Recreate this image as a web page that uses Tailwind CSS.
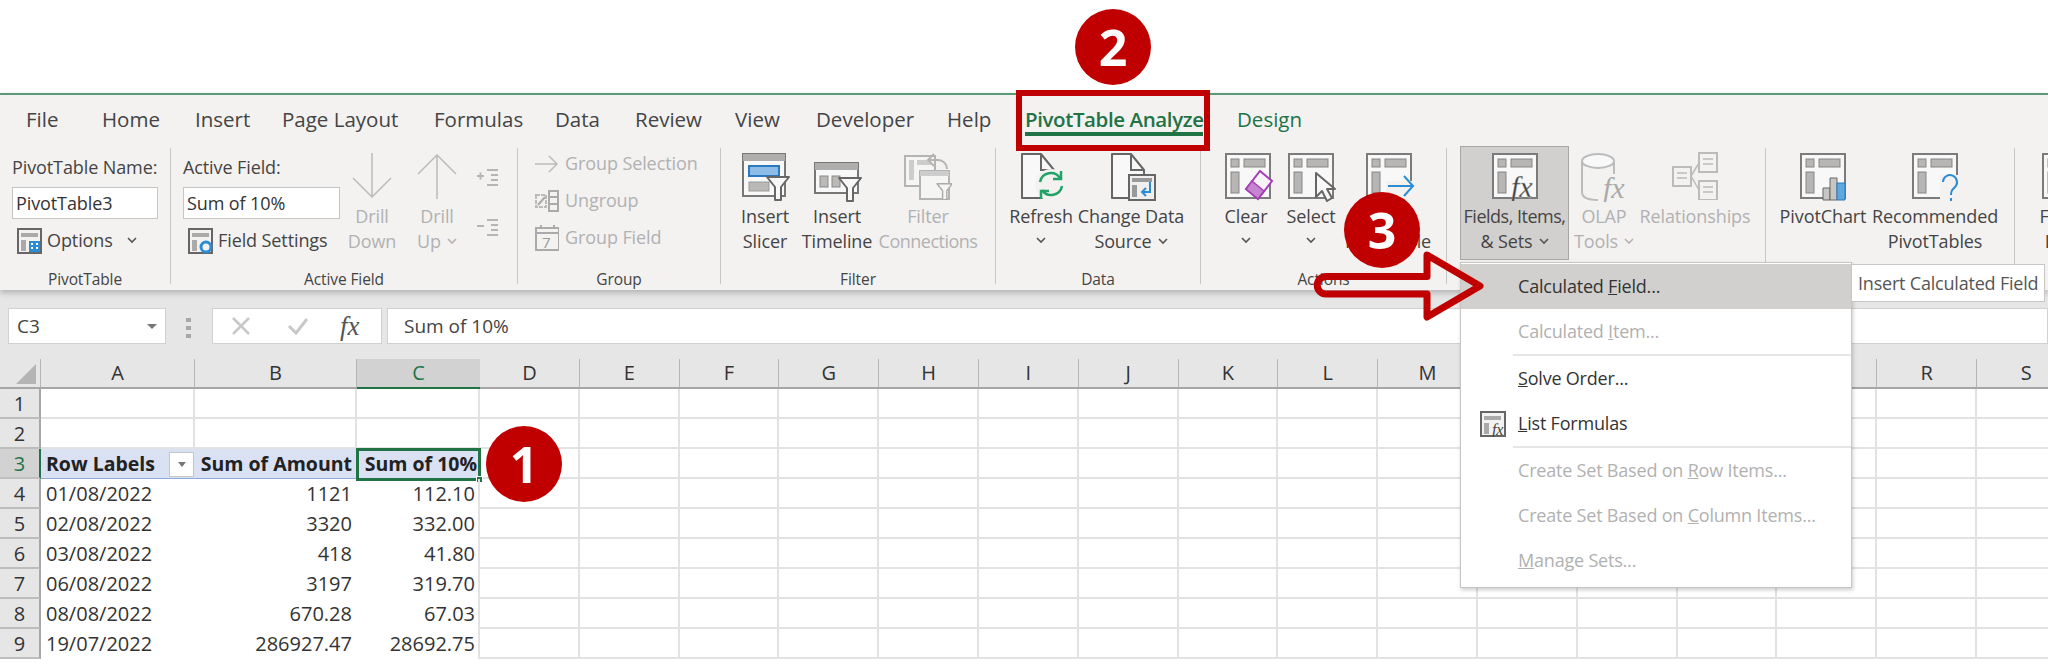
<!DOCTYPE html>
<html lang="en">
<head>
  <meta charset="UTF-8" />
  <title>PivotTable Analyze</title>
  <script src="https://cdn.jsdelivr.net/npm/@tailwindcss/browser@4"></script>
</head>
<body class="relative w-[2048px] h-[663px] overflow-hidden bg-white text-[#444] [font-family:'Open_Sans',sans-serif]">

  <!-- shared ribbon icons -->
  <svg class="hidden">
    <defs>
      <g id="pivot">
        <rect x="1" y="1" width="44" height="44" fill="#f8f8f8" stroke="#7b7b7b" stroke-width="2"/>
        <rect x="6" y="6" width="8" height="8" fill="#b8b6b4" stroke="#858585"/>
        <rect x="19" y="6" width="21" height="8" fill="#b8b6b4" stroke="#858585"/>
        <rect x="6" y="19" width="8" height="21" fill="#b8b6b4" stroke="#858585"/>
      </g>
      <g id="funnel">
        <path d="M1 1h22l-8 10v13h-6v-13z" fill="#f8f8f8" stroke="#666" stroke-width="2" stroke-linejoin="round"/>
      </g>
      <g id="doc">
        <path d="M1 1h19l13 16v28h-32z" fill="#f8f8f8" stroke="#666" stroke-width="2" stroke-linejoin="round"/>
        <path d="M20 1v16h13" fill="none" stroke="#666" stroke-width="2"/>
      </g>
      <path id="chev" d="M1 1l4 4 4-4" fill="none" stroke="#555" stroke-width="1.6"/>
    </defs>
  </svg>

  <!-- ribbon -->
  <div class="mt-[93px] border-t-2 border-[#5a9a74] bg-[#f3f2f1] h-[197px] relative z-10 shadow-[0_3px_6px_rgba(0,0,0,0.22)] overflow-hidden">
    <nav class="flex h-[49px] items-center text-[20.5px]">
      <span class="ml-[26px] w-[76px]">File</span>
      <span class="w-[93px]">Home</span>
      <span class="w-[87px]">Insert</span>
      <span class="w-[152px]">Page Layout</span>
      <span class="w-[121px]">Formulas</span>
      <span class="w-[80px]">Data</span>
      <span class="w-[100px]">Review</span>
      <span class="w-[81px]">View</span>
      <span class="w-[131px]">Developer</span>
      <span class="w-[78px]">Help</span>
      <span class="relative w-[212px] font-semibold text-[#217346] tracking-[-0.4px]">PivotTable Analyze<span class="absolute left-0 top-[28px] w-[178px] h-[4px] bg-[#217346]"></span></span>
      <span class="text-[#217346]">Design</span>
    </nav>

    <div class="flex h-[136px] mt-[4px] text-[18px] leading-[25px] tracking-[-0.1px]">

      <!-- PivotTable -->
      <section class="w-[171px] shrink-0 h-full border-r border-[#c8c6c4] flex flex-col">
        <div class="pl-[12px] pt-[7px] whitespace-nowrap">PivotTable Name:</div>
        <div class="ml-[12px] mt-[7px] w-[146px] h-[32px] border border-[#c6c6c6] bg-white pl-[3px] leading-[30px] text-[#333]">PivotTable3</div>
        <div class="ml-[17px] mt-[9px] flex items-center h-[25px]">
          <svg width="25" height="26" viewBox="0 0 25 26"><rect x="1" y="1" width="23" height="24" fill="#f3f2f1" stroke="#666" stroke-width="2"/><rect x="4" y="5" width="17" height="4" fill="#aaa"/><rect x="4" y="12" width="5" height="11" fill="#aaa"/><rect x="12" y="13" width="11" height="11" fill="#2a8dd4"/><path d="M14 16h2M19 16h2M14 20h2M19 20h2" stroke="#fff" stroke-width="2"/></svg>
          <span class="ml-[5px]">Options</span>
          <svg class="ml-[14px]" width="10" height="7"><use href="#chev"/></svg>
        </div>
        <div class="mt-auto mb-[-7px] text-center text-[15.5px] leading-[24px]">PivotTable</div>
      </section>

      <!-- Active Field -->
      <section class="w-[347px] shrink-0 h-full border-r border-[#c8c6c4] flex flex-col">
        <div class="flex">
          <div class="ml-[12px] w-[157px]">
            <div class="pt-[7px]">Active Field:</div>
            <div class="mt-[7px] h-[32px] border border-[#c6c6c6] bg-white pl-[3px] leading-[30px] text-[#333]">Sum of 10%</div>
            <div class="mt-[9px] ml-[5px] flex items-center h-[25px] whitespace-nowrap">
              <svg width="25" height="26" viewBox="0 0 25 26"><rect x="1" y="1" width="23" height="24" fill="#f3f2f1" stroke="#666" stroke-width="2"/><rect x="4" y="5" width="17" height="4" fill="#aaa"/><rect x="4" y="12" width="5" height="11" fill="#aaa"/><circle cx="18" cy="19" r="5" fill="none" stroke="#2a8dd4" stroke-width="3"/></svg>
              <span class="ml-[5px]">Field Settings</span>
            </div>
          </div>
          <div class="ml-[2px] w-[60px] flex flex-col items-center text-[#b1b1b1]">
            <div class="h-[56px] pt-[5px]"><svg width="40" height="46" viewBox="0 0 40 46"><path d="M20 0v44M1 25l19 19 19-19" fill="none" stroke="#bbb" stroke-width="1.5"/></svg></div>
            <div>Drill</div>
            <div>Down</div>
          </div>
          <div class="ml-[5px] w-[60px] flex flex-col items-center text-[#b1b1b1]">
            <div class="h-[56px] pt-[5px]"><svg width="40" height="46" viewBox="0 0 40 46"><path d="M20 46V2M1 21L20 2l19 19" fill="none" stroke="#bbb" stroke-width="1.5"/></svg></div>
            <div>Drill</div>
            <div class="flex items-center">Up<svg class="ml-[6px]" width="10" height="7"><use href="#chev" opacity=".4"/></svg></div>
          </div>
          <div class="ml-[9px] w-[24px] flex flex-col pt-[21px] gap-[32px]">
            <svg width="24" height="18" viewBox="0 0 24 18"><path d="M1 7h7M4.500 3.500v7M11 1h11M15 6h7M15 11h7M11 16h11" fill="none" stroke="#b5b5b5" stroke-width="2"/></svg>
            <svg width="24" height="18" viewBox="0 0 24 18"><path d="M1 7h7M11 1h11M15 6h7M15 11h7M11 16h11" fill="none" stroke="#b5b5b5" stroke-width="2"/></svg>
          </div>
        </div>
        <div class="mt-auto mb-[-7px] text-center text-[15.5px] leading-[24px]">Active Field</div>
      </section>

      <!-- Group -->
      <section class="w-[203px] shrink-0 h-full border-r border-[#c8c6c4] flex flex-col text-[#b1b1b1]">
        <div class="pl-[17px] -mt-[3px]">
          <div class="h-[37px] flex items-center whitespace-nowrap">
            <svg class="w-[24px]" height="18" viewBox="0 0 24 18"><path d="M0 9h22M14 1l8 8-8 8" fill="none" stroke="#bbb" stroke-width="1.5"/></svg>
            <span class="ml-[6px]">Group Selection</span>
          </div>
          <div class="h-[37px] flex items-center">
            <svg class="w-[24px]" height="24" viewBox="0 0 24 24"><rect x="1" y="6" width="10" height="12" fill="none" stroke="#bbb" stroke-width="2" stroke-dasharray="4 1"/><path d="M3 16l7-8M14 2h9v20h-9zM14 8h9M14 15h9" fill="none" stroke="#aaa" stroke-width="2"/></svg>
            <span class="ml-[6px]">Ungroup</span>
          </div>
          <div class="h-[37px] flex items-center">
            <svg class="w-[24px]" height="26" viewBox="0 0 24 26"><rect x="1" y="3" width="23" height="22" fill="#f3f2f1" stroke="#aaa" stroke-width="2"/><path d="M1 8h23M6 0v4M19 0v4" stroke="#aaa" stroke-width="2"/><text x="7" y="23" font-size="15" fill="#999" font-family="Open Sans">7</text></svg>
            <span class="ml-[6px]">Group Field</span>
          </div>
        </div>
        <div class="mt-auto mb-[-7px] text-center text-[15.5px] leading-[24px] text-[#444]">Group</div>
      </section>

      <!-- Filter -->
      <section class="w-[275px] shrink-0 h-full border-r border-[#c8c6c4] flex flex-col">
        <div class="flex">
          <div class="ml-[14px] w-[60px] flex flex-col items-center">
            <div class="h-[56px] pt-[5px] pl-[2px]">
              <svg width="48" height="48" viewBox="0 0 48 48"><path d="M1 1h42v42h-42z" fill="#f8f8f8" stroke="#777" stroke-width="2"/><rect x="1" y="1" width="42" height="7" fill="#b0aeac"/><rect x="7" y="13" width="30" height="10" fill="#8dbde6" stroke="#2a78bd" stroke-width="2"/><rect x="7" y="29" width="20" height="9" fill="#bbb9b7" stroke="#999"/><use href="#funnel" x="24" y="23"/></svg>
            </div>
            <div>Insert</div>
            <div>Slicer</div>
          </div>
          <div class="ml-[6px] w-[72px] flex flex-col items-center">
            <div class="h-[56px] pt-[14px] pl-[2px]">
              <svg width="48" height="40" viewBox="0 0 48 40"><path d="M1 1h43v30h-43z" fill="#f8f8f8" stroke="#777" stroke-width="2"/><rect x="1" y="1" width="43" height="7" fill="#b0aeac"/><rect x="6" y="14" width="8" height="11" fill="#bbb9b7" stroke="#888"/><rect x="18" y="14" width="8" height="11" fill="#bbb9b7" stroke="#888"/><use href="#funnel" x="24" y="15"/></svg>
            </div>
            <div>Insert</div>
            <div>Timeline</div>
          </div>
          <div class="ml-[3px] w-[104px] flex flex-col items-center text-[#b1b1b1] whitespace-nowrap">
            <div class="h-[56px] pt-[4px]">
              <svg width="48" height="48" viewBox="0 0 48 48" opacity=".5"><path d="M1 4h30v30h-30z" fill="#f8f8f8" stroke="#777" stroke-width="2"/><rect x="5" y="8" width="5" height="20" fill="#aaa"/><rect x="13" y="8" width="14" height="5" fill="#aaa"/><path d="M16 19h29v28h-29z" fill="#f8f8f8" stroke="#777" stroke-width="2"/><rect x="16" y="19" width="29" height="5" fill="#aaa"/><path d="M30 2l-6 6 6 6M24 8h10a9 9 0 0 1 9 9" fill="none" stroke="#777" stroke-width="2"/><use href="#funnel" x="29" y="30" transform="translate(12 10) scale(.7)"/></svg>
            </div>
            <div>Filter</div>
            <div class="tracking-[-0.5px]">Connections</div>
          </div>
        </div>
        <div class="mt-auto mb-[-7px] text-center text-[15.5px] leading-[24px]">Filter</div>
      </section>

      <!-- Data -->
      <section class="w-[205px] shrink-0 h-full border-r border-[#c8c6c4] flex flex-col">
        <div class="flex">
          <div class="ml-[10px] w-[70px] flex flex-col items-center">
            <div class="h-[56px] pt-[5px] pl-[6px]">
              <svg width="46" height="48" viewBox="0 0 46 48"><use href="#doc"/><circle cx="30" cy="32" r="16" fill="#f3f2f1"/><path d="M19 29a11 11 0 0 1 20-4M41 33a11 11 0 0 1-20 4" fill="none" stroke="#21a366" stroke-width="2.500"/><path d="M40 18v8h-8M20 46v-8h8" fill="none" stroke="#21a366" stroke-width="2.500"/></svg>
            </div>
            <div>Refresh</div>
            <svg class="mt-[8px]" width="10" height="7"><use href="#chev"/></svg>
          </div>
          <div class="w-[110px] flex flex-col items-center whitespace-nowrap">
            <div class="h-[56px] pt-[5px] pl-[6px]">
              <svg width="46" height="48" viewBox="0 0 46 48"><use href="#doc"/><rect x="18" y="22" width="26" height="25" fill="#efefef" stroke="#666" stroke-width="2"/><path d="M21 25h20v4h-20zM21 32h5v12h-5z" fill="#999"/><path d="M39 30v10h-8M35 36l-4 4 4 4" transform="translate(0 -1)" fill="none" stroke="#2a8dd4" stroke-width="2"/></svg>
            </div>
            <div>Change Data</div>
            <div class="flex items-center">Source<svg class="ml-[6px]" width="10" height="7"><use href="#chev"/></svg></div>
          </div>
        </div>
        <div class="mt-auto mb-[-7px] text-center text-[15.5px] leading-[24px]">Data</div>
      </section>

      <!-- Actions -->
      <section class="w-[246px] shrink-0 h-full border-r border-[#c8c6c4] flex flex-col">
        <div class="flex">
          <div class="ml-[15px] w-[60px] flex flex-col items-center">
            <div class="h-[56px] pt-[5px] pl-[8px]">
              <svg width="50" height="48" viewBox="0 0 50 48"><use href="#pivot"/><path d="M35 18l12 10-14 18-12-10z" fill="#f8f2f9" stroke="#a33eb5" stroke-width="2"/><path d="M21 36l6-8 12 10-6 8z" fill="#c583d0" stroke="#a33eb5" stroke-width="1.500"/></svg>
            </div>
            <div>Clear</div>
            <svg class="mt-[8px]" width="10" height="7"><use href="#chev"/></svg>
          </div>
          <div class="ml-[5px] w-[60px] flex flex-col items-center">
            <div class="h-[56px] pt-[5px] pl-[4px]">
              <svg width="50" height="50" viewBox="0 0 50 50"><use href="#pivot"/><path d="M28 20v24l6-6 5 10 5-3-5-9h8z" fill="#f8f8f8" stroke="#666" stroke-width="2" stroke-linejoin="round"/></svg>
            </div>
            <div>Select</div>
            <svg class="mt-[8px]" width="10" height="7"><use href="#chev"/></svg>
          </div>
          <div class="ml-[2px] w-[90px] flex flex-col items-center">
            <div class="h-[56px] pt-[5px] pl-[6px]">
              <svg width="50" height="48" viewBox="0 0 50 48"><use href="#pivot"/><rect x="20" y="28" width="30" height="20" fill="#f3f2f1"/><path d="M22 33h24M38 23l9 10-9 10" fill="none" stroke="#2a8dd4" stroke-width="2"/></svg>
            </div>
            <div class="h-[25px]"></div>
            <div>PivotTable</div>
          </div>
        </div>
        <div class="mt-auto mb-[-7px] text-center text-[15.5px] leading-[24px]">Actions</div>
      </section>

      <!-- Calculations -->
      <section class="w-[319px] shrink-0 h-full border-r border-[#c8c6c4] flex flex-col">
        <div class="flex">
          <div class="ml-[13px] -mt-[2px] w-[109px] h-[114px] bg-[#d2d0ce] border border-[#a9a7a5] flex flex-col items-center whitespace-nowrap">
            <div class="h-[57px] pt-[6px]">
              <svg width="46" height="48" viewBox="0 0 46 48"><use href="#pivot"/><text x="19" y="44" font-size="30" font-style="italic" fill="#444" stroke="#d2d0ce" stroke-width=".3" font-family="Liberation Serif">fx</text></svg>
            </div>
            <div class="tracking-[-0.5px]">Fields, Items,</div>
            <div class="flex items-center">&amp; Sets<svg class="ml-[6px]" width="10" height="7"><use href="#chev"/></svg></div>
          </div>
          <div class="ml-[5px] w-[60px] flex flex-col items-center text-[#b1b1b1]">
            <div class="h-[56px] pt-[4px]">
              <svg width="46" height="50" viewBox="0 0 46 50"><path d="M1 10v30c0 6 8 8 16 8M33 10v12" fill="none" stroke="#bbb" stroke-width="2"/><ellipse cx="17" cy="9" rx="16" ry="7" fill="#f8f8f8" stroke="#bbb" stroke-width="2"/><text x="22" y="46" font-size="30" font-style="italic" fill="#aaa" font-family="Liberation Serif">fx</text></svg>
            </div>
            <div>OLAP</div>
            <div class="flex items-center">Tools<svg class="ml-[6px]" width="10" height="7"><use href="#chev" opacity=".4"/></svg></div>
          </div>
          <div class="ml-[4px] w-[114px] flex flex-col items-center text-[#b1b1b1]">
            <div class="h-[56px] pt-[4px]">
              <svg width="46" height="48" viewBox="0 0 46 48"><rect x="27" y="1" width="18" height="19" fill="#f3f2f1" stroke="#bbb" stroke-width="2"/><rect x="27" y="29" width="18" height="19" fill="#f3f2f1" stroke="#bbb" stroke-width="2"/><rect x="1" y="15" width="18" height="19" fill="#f3f2f1" stroke="#bbb" stroke-width="2"/><path d="M19 24l8-13M19 24l8 14M5 21h10M5 26h10M31 7h10M31 12h10M31 35h10M31 40h10" fill="none" stroke="#bbb" stroke-width="1.500"/></svg>
            </div>
            <div>Relationships</div>
          </div>
        </div>
      </section>

      <!-- Tools -->
      <section class="w-[249px] shrink-0 h-full border-r border-[#c8c6c4] flex flex-col">
        <div class="flex">
          <div class="ml-[12px] w-[90px] flex flex-col items-center">
            <div class="h-[56px] pt-[5px] pl-[2px]">
              <svg width="48" height="48" viewBox="0 0 48 48"><use href="#pivot"/><path d="M23 35h7v12h-7z" fill="#c8c6c4" stroke="#666"/><path d="M30 25h7v22h-7z" fill="#c8c6c4" stroke="#666"/><path d="M37 30h8v17h-8z" fill="#5ea8e0" stroke="#2a78bd"/></svg>
            </div>
            <div>PivotChart</div>
          </div>
          <div class="ml-[2px] w-[130px] flex flex-col items-center">
            <div class="h-[56px] pt-[5px] pl-[2px]">
              <svg width="48" height="48" viewBox="0 0 48 48"><use href="#pivot"/><rect x="28" y="22" width="20" height="26" fill="#f3f2f1"/><path d="M31 29a7 7 0 1 1 12 5c-3 3-4 4-4 8M39 45v3" fill="none" stroke="#2a8dd4" stroke-width="2"/></svg>
            </div>
            <div>Recommended</div>
            <div>PivotTables</div>
          </div>
        </div>
      </section>

      <!-- Show -->
      <section class="w-[60px] shrink-0 h-full">
        <div class="ml-[14px] w-[60px] flex flex-col items-center">
          <div class="h-[56px] pt-[5px] pl-[12px]"><svg width="46" height="46"><use href="#pivot"/></svg></div>
          <div>Field</div>
          <div>List</div>
        </div>
      </section>
    </div>
  </div>

  <!-- formula bar -->
  <div class="h-[69px] bg-[#e6e6e6] flex items-start pt-[18px] text-[19px] text-[#444]">
    <div class="ml-[8px] w-[158px] h-[36px] bg-white border border-[#d0d0d0] flex items-center justify-between px-[8px]">
      <span>C3</span>
      <span class="w-0 h-0 border-x-[5px] border-x-transparent border-t-[5px] border-t-[#777]"></span>
    </div>
    <div class="ml-[20px] mt-[10px] w-[6px] flex flex-col gap-[4px]">
      <span class="h-[4px] w-[5px] bg-[#a8a8a8]"></span>
      <span class="h-[4px] w-[5px] bg-[#a8a8a8]"></span>
      <span class="h-[4px] w-[5px] bg-[#a8a8a8]"></span>
    </div>
    <div class="ml-[20px] w-[170px] h-[36px] bg-white border border-[#d0d0d0] flex items-center">
      <svg class="ml-[18px]" width="20" height="18" viewBox="0 0 20 18"><path d="M2 1l16 16M18 1L2 17" stroke="#c8c8c8" stroke-width="2.500"/></svg>
      <svg class="ml-[36px]" width="22" height="18" viewBox="0 0 22 18"><path d="M2 9l7 7L20 2" fill="none" stroke="#c8c8c8" stroke-width="3"/></svg>
      <span class="ml-[31px] italic text-[27px] leading-none text-[#555] [font-family:'Liberation_Serif',serif]">fx</span>
    </div>
    <div class="ml-[5px] flex-1 h-[36px] bg-white border border-[#d0d0d0] flex items-center pl-[16px]">Sum of 10%</div>
  </div>

  <!-- sheet -->
  <div id="sheet" class="text-[20px] text-[#333]"></div>

  <!-- dropdown -->
  <div class="absolute z-20 left-[1460px] top-[262px] w-[392px] h-[326px] bg-white border border-[#c8c6c4] shadow-[1px_2px_4px_rgba(0,0,0,0.2)] text-[18px] tracking-[-0.2px] pt-[1px]">
    <div class="h-[45px] bg-[#d2d0ce] flex items-center pl-[57px] text-[#333]"><span>Calculated <u>F</u>ield...</span></div>
    <div class="h-[45px] flex items-center pl-[57px] text-[#b1b1b1]"><span>Calculated <u>I</u>tem...</span></div>
    <div class="ml-[52px] h-[2px] bg-[#e6e6e6]"></div>
    <div class="h-[45px] flex items-center pl-[57px] text-[#333]"><span><u>S</u>olve Order...</span></div>
    <div class="h-[45px] flex items-center pl-[19px] text-[#333]">
      <svg width="26" height="26" viewBox="0 0 26 26"><rect x="1" y="1" width="24" height="24" fill="#f3f2f1" stroke="#666" stroke-width="2"/><path d="M4 5h17v4H4zM4 12h5v11H4z" fill="#aaa"/><text x="12" y="24" font-size="16" font-style="italic" fill="#444" font-family="Liberation Serif">fx</text></svg>
      <span class="ml-[12px]"><u>L</u>ist Formulas</span>
    </div>
    <div class="ml-[52px] h-[2px] bg-[#e6e6e6]"></div>
    <div class="h-[45px] flex items-center pl-[57px] text-[#b1b1b1]"><span>Create Set Based on <u>R</u>ow Items...</span></div>
    <div class="h-[45px] flex items-center pl-[57px] text-[#b1b1b1]"><span>Create Set Based on <u>C</u>olumn Items...</span></div>
    <div class="h-[45px] flex items-center pl-[57px] text-[#b1b1b1]"><span><u>M</u>anage Sets...</span></div>
  </div>

  <!-- tooltip -->
  <div class="absolute z-20 left-[1851px] top-[264px] w-[194px] h-[38px] bg-white border border-[#c8c6c4] flex items-center pl-[6px] text-[18px] text-[#555] whitespace-nowrap tracking-[-0.2px]">Insert Calculated Field</div>

  <!-- callouts -->
  <div class="absolute z-30 left-[1016px] top-[90px] w-[194px] h-[61px] border-[6px] border-[#c00000]"></div>
  <div class="absolute z-30 left-[1075px] top-[9px] w-[76px] h-[76px] rounded-full bg-[#c00000] text-white font-bold text-[50px] flex items-center justify-center">2</div>
  <div class="absolute z-30 left-[1344px] top-[192px] w-[76px] h-[76px] rounded-full bg-[#c00000] text-white font-bold text-[50px] flex items-center justify-center">3</div>
  <div class="absolute z-30 left-[486px] top-[426px] w-[76px] h-[76px] rounded-full bg-[#c00000] text-white font-bold text-[50px] flex items-center justify-center">1</div>
  <svg class="absolute z-30 left-[1310px] top-[248px]" width="180" height="78" viewBox="0 0 180 78">
    <path d="M16 28.500H117V7L170 38 117 69V46H16a8.750 8.750 0 0 1 0-17.500z" fill="none" stroke="#c00000" stroke-width="7" stroke-linejoin="round"/>
  </svg>

  <script>
    // build the worksheet rows, the empty D..S cells are all the same
    const colWidth = 'w-[99.8px] shrink-0';
    const letters = ['D','E','F','G','H','I','J','K','L','M','N','O','P','Q','R','S'];
    let html = '<div class="flex h-[30px] bg-[#e6e6e6] border-b-2 border-[#a6a6a6] text-[20px] text-[#333]">'
      + '<div class="w-[41px] shrink-0 border-r border-[#b5b5b5] flex items-end justify-end pb-[3px] pr-[4px]"><span class="w-0 h-0 border-l-[20px] border-l-transparent border-b-[20px] border-b-[#b4b4b4]"></span></div>'
      + '<div class="w-[154px] shrink-0 text-center border-r border-[#b5b5b5] leading-[28px]">A</div>'
      + '<div class="w-[162px] shrink-0 text-center border-r border-[#b5b5b5] leading-[28px]">B</div>'
      + '<div class="w-[123px] shrink-0 text-center bg-[#d2d2d2] text-[#217346] border-b-2 border-[#217346] -mb-[2px] leading-[28px]">C</div>';
    for (const l of letters) {
      html += '<div class="' + colWidth + ' text-center border-r border-[#b5b5b5] leading-[28px]">' + l + '</div>';
    }
    html += '</div>';

    const rows = [
      ['', '', ''], ['', '', ''],
      ['Row Labels', 'Sum of Amount', 'Sum of 10%'],
      ['01/08/2022', '1121', '112.10'],
      ['02/08/2022', '3320', '332.00'],
      ['03/08/2022', '418', '41.80'],
      ['06/08/2022', '3197', '319.70'],
      ['08/08/2022', '670.28', '67.03'],
      ['19/07/2022', '286927.47', '28692.75'],
    ];
    rows.forEach((r, i) => {
      const head = i === 2;
      const data = i > 2;
      const line = data ? '' : head ? 'border-b border-[#8ea9db]' : 'border-b-2 border-r-2 border-[#e2e2e2]';
      const bg = head ? 'bg-[#d9e1f2] font-bold text-[19.5px] text-[#222]' : '';
      html += '<div class="flex h-[30px] leading-[29px]">'
        + '<div class="w-[41px] shrink-0 text-center border-b-2 border-r-2 ' + (head ? 'bg-[#d2d2d2] text-[#217346] border-b-[#c0c0c0] border-r-[#217346]' : 'bg-[#e6e6e6] border-b-[#bdbdbd] border-r-[#a6a6a6]') + '">' + (i + 1) + '</div>'
        + '<div class="relative w-[154px] shrink-0 pl-[5px] whitespace-nowrap ' + line + ' ' + bg + '">' + r[0]
        + (head ? '<span class="absolute right-[1px] top-[3px] w-[25px] h-[25px] bg-white border border-[#c6c6c6] flex items-center justify-center"><span class="w-0 h-0 border-x-[4px] border-x-transparent border-t-[5px] border-t-[#777]"></span></span>' : '')
        + '</div>'
        + '<div class="w-[162px] shrink-0 text-right pr-[5px] whitespace-nowrap ' + line + ' ' + bg + '">' + r[1] + '</div>'
        + '<div class="relative w-[123px] shrink-0 text-right pr-[3px] whitespace-nowrap ' + line + ' ' + bg + (data ? ' border-r-2 border-[#e2e2e2]' : '') + '">' + r[2]
        + (head ? '<span class="absolute -left-[1px] -top-[1px] w-[125px] h-[33px] border-[3px] border-[#217346]"></span><span class="absolute -right-[3px] top-[27px] w-[7px] h-[7px] bg-[#217346] border border-white"></span>' : '')
        + '</div>';
      for (const l of letters) {
        html += '<div class="' + colWidth + ' border-b-2 border-r-2 border-[#e2e2e2]"></div>';
      }
      html += '</div>';
    });
    document.getElementById('sheet').innerHTML = html;
  </script>
</body>
</html>
